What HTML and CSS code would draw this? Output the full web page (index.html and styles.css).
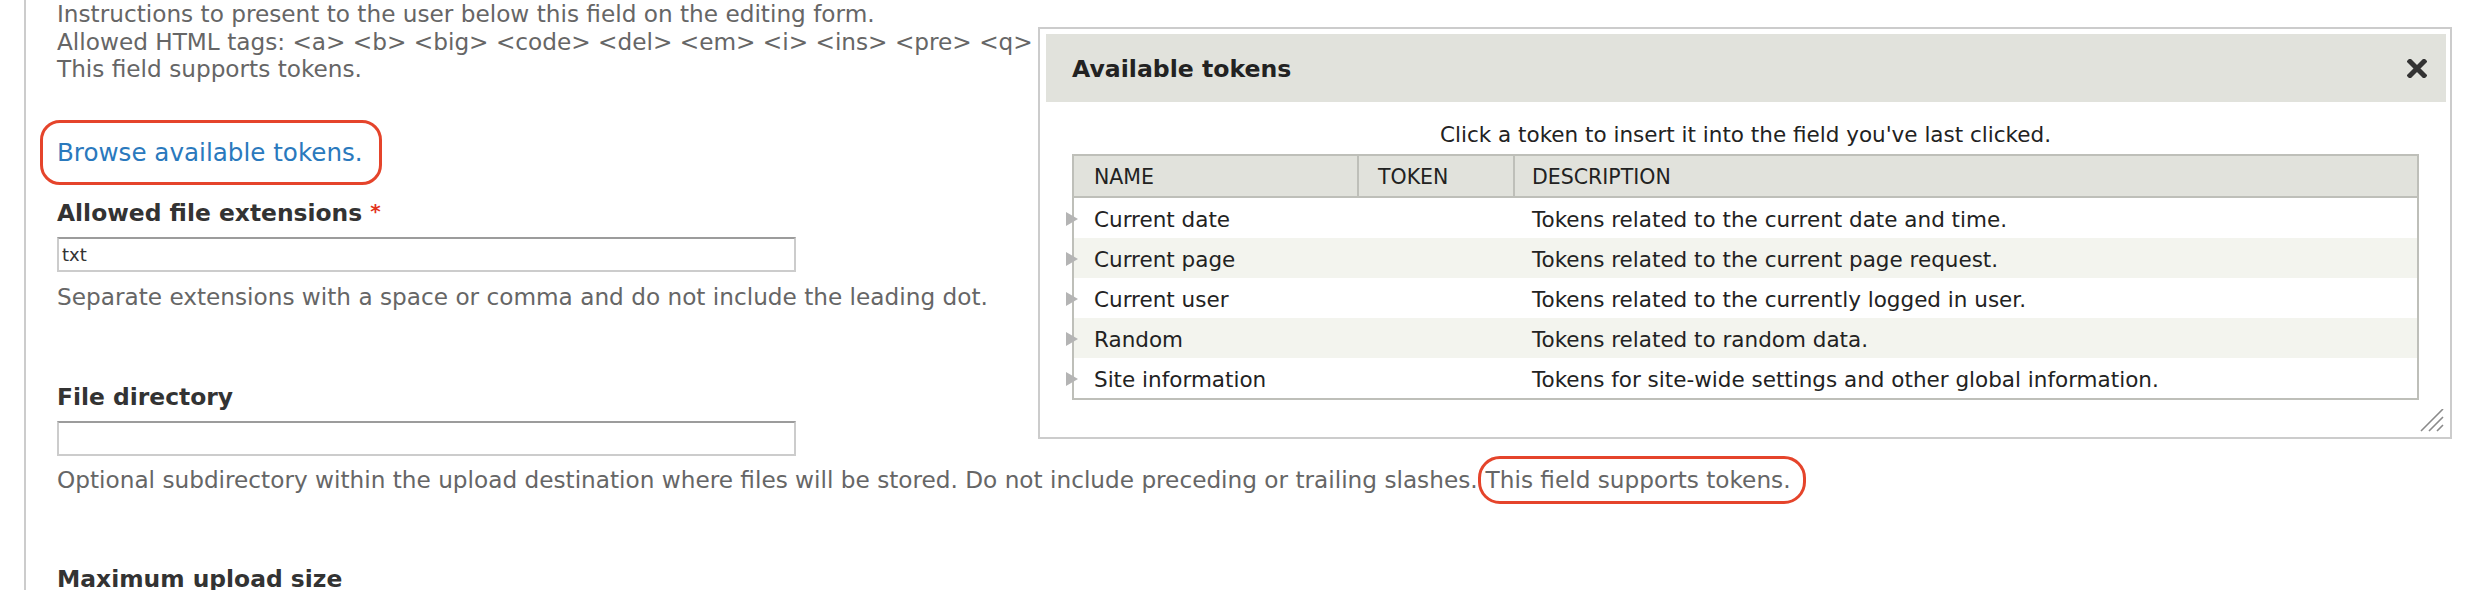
FILE: index.html
```html
<!DOCTYPE html>
<html lang="en">
<head>
<meta charset="utf-8">
<title>Token browser</title>
<link rel="stylesheet" href="styles.css">
</head>
<body>
<div class="page">
  <div class="form">
    <div class="desc first">
      <div>Instructions to present to the user below this field on the editing form.</div>
      <div class="nowrap">Allowed HTML tags: &lt;a&gt; &lt;b&gt; &lt;big&gt; &lt;code&gt; &lt;del&gt; &lt;em&gt; &lt;i&gt; &lt;ins&gt; &lt;pre&gt; &lt;q&gt;</div>
      <div>This field supports tokens.</div>
    </div>

    <div class="note-box browse-box"><a class="link" href="#">Browse available tokens.</a></div>

    <label class="label label-ext">Allowed file extensions <span class="req">*</span></label>
    <div class="input input-ext">txt</div>
    <div class="desc desc-ext">Separate extensions with a space or comma and do not include the leading dot.</div>

    <label class="label label-dir">File directory</label>
    <div class="input input-dir"></div>
    <div class="desc desc-dir">Optional subdirectory within the upload destination where files will be stored. Do not include preceding or trailing slashes.<span class="note-box inline-note">This field supports tokens.</span></div>

    <label class="label label-max">Maximum upload size</label>
  </div>

  <div class="dialog">
    <div class="dialog-title">
      <span class="dialog-title-text">Available tokens</span>
      <svg class="close" width="20" height="19" viewBox="0 0 20 19" aria-label="close">
        <path d="M3 2.5 L17 16.5 M17 2.5 L3 16.5" stroke="#333" stroke-width="5" stroke-linecap="square" fill="none"/>
      </svg>
    </div>
    <div class="dialog-body">
      <p class="hint">Click a token to insert it into the field you've last clicked.</p>
      <table class="tokens">
        <thead>
          <tr><th class="c-name">Name</th><th class="c-token">Token</th><th class="c-desc">Description</th></tr>
        </thead>
        <tbody>
          <tr class="odd"><td class="c-name"><span class="expander"></span>Current date</td><td></td><td class="c-desc">Tokens related to the current date and time.</td></tr>
          <tr class="even"><td class="c-name"><span class="expander"></span>Current page</td><td></td><td class="c-desc">Tokens related to the current page request.</td></tr>
          <tr class="odd"><td class="c-name"><span class="expander"></span>Current user</td><td></td><td class="c-desc">Tokens related to the currently logged in user.</td></tr>
          <tr class="even"><td class="c-name"><span class="expander"></span>Random</td><td></td><td class="c-desc">Tokens related to random data.</td></tr>
          <tr class="odd"><td class="c-name"><span class="expander"></span>Site information</td><td></td><td class="c-desc">Tokens for site-wide settings and other global information.</td></tr>
        </tbody>
      </table>
    </div>
    <svg class="grip" width="24" height="23" viewBox="0 0 24 23">
      <path d="M1 22 L23 0 M9 22 L23 8 M17 22 L23 16" stroke="#8a8a8a" stroke-width="1.6" fill="none"/>
    </svg>
  </div>
</div>
</body>
</html>
```

FILE: styles.css
```css
* { box-sizing: border-box; }

html, body {
  margin: 0;
  padding: 0;
  background: #ffffff;
}

body {
  font-family: "DejaVu Sans", "Liberation Sans", sans-serif;
  color: #333333;
}

.page {
  position: relative;
  width: 2480px;
  height: 590px;
  overflow: hidden;
}

.form {
  margin-left: 24px;
  border-left: 2px solid #cccccc;
  padding-left: 31px;
  height: 590px;
}

.desc {
  font-size: 23.2px;
  line-height: 27.5px;
  color: #666666;
}

.nowrap { white-space: nowrap; }

.note-box {
  border: 3px solid #e5442b;
}

.browse-box {
  display: block;
  width: max-content;
  margin-top: 37.5px;
  margin-left: -17px;
  padding: 5px 16px 1px 14px;
  border-radius: 20px;
  line-height: 50px;
}

.link {
  font-size: 24.6px;
  color: #2a79bd;
  text-decoration: none;
}

.label {
  display: block;
  font-size: 23.4px;
  line-height: 27.5px;
  font-weight: bold;
  color: #333333;
}

.req {
  color: #e2331c;
  font-size: 20px;
  vertical-align: top;
  line-height: 22px;
}

.label-ext { margin-top: 15px; }
.label-dir { margin-top: 73.5px; }
.label-max { margin-top: 62px; }

.input {
  width: 739px;
  height: 35px;
  margin-top: 9.5px;
  border: 2px solid #cccccc;
  border-top-color: #9c9c9c;
  padding-left: 3px;
  font-size: 18px;
  line-height: 31px;
  color: #333333;
}

.desc-ext { margin-top: 11px; }

.desc-dir { margin-top: 0; }

.inline-note {
  display: inline-block;
  padding: 7.3px 12px 7.2px 5px;
  border-radius: 22px;
}

/* Dialog */
.dialog {
  position: absolute;
  left: 1038px;
  top: 27px;
  width: 1414px;
  height: 412px;
  background: #ffffff;
  border: 2px solid #cccccc;
  padding: 5px 4px 0 6px;
  z-index: 10;
}

.dialog-title {
  display: flex;
  align-items: center;
  justify-content: space-between;
  height: 68px;
  padding: 0 19px 0 26px;
  background: #e1e2dc;
}

.dialog-title-text {
  font-size: 23.6px;
  font-weight: bold;
  color: #222222;
  line-height: 27.5px;
  padding-top: 3px;
}

.close { display: block; }

.dialog-body {
  padding: 0 27px 0 26px;
  color: #222222;
}

.hint {
  margin: 20px 0 6px;
  text-align: center;
  font-size: 21.5px;
  line-height: 26px;
}

.tokens {
  width: 1347px;
  border-collapse: separate;
  border-spacing: 0;
  border: 2px solid #bebfb9;
  font-size: 21.5px;
  table-layout: fixed;
}

.tokens th {
  background: #e1e2dc;
  text-align: left;
  font-weight: normal;
  font-size: 20.5px;
  text-transform: uppercase;
  color: #222222;
  padding: 9px 0 7px 20px;
  line-height: 24px;
  border-bottom: 2px solid #bebfb9;
}

.tokens th + th { border-left: 2px solid #bebfb9; }

.tokens th.c-name { width: 283px; }
.tokens th.c-token { width: 156px; padding-left: 19px; }
.tokens th.c-desc { padding-left: 17px; }

.tokens td {
  padding: 10px 0 6px 20px;
  line-height: 24px;
  white-space: nowrap;
}

.tokens td.c-name { position: relative; }
.tokens td.c-desc { padding-left: 19px; }

.tokens tr.even td { background: #f3f4ee; }
.tokens tr.odd td { background: #ffffff; }

.expander {
  position: absolute;
  left: -8px;
  top: 14px;
  width: 0;
  height: 0;
  border-left: 12px solid #b4b4b4;
  border-top: 7.5px solid transparent;
  border-bottom: 7.5px solid transparent;
}

.grip {
  position: absolute;
  right: 6px;
  bottom: 5px;
}
```
